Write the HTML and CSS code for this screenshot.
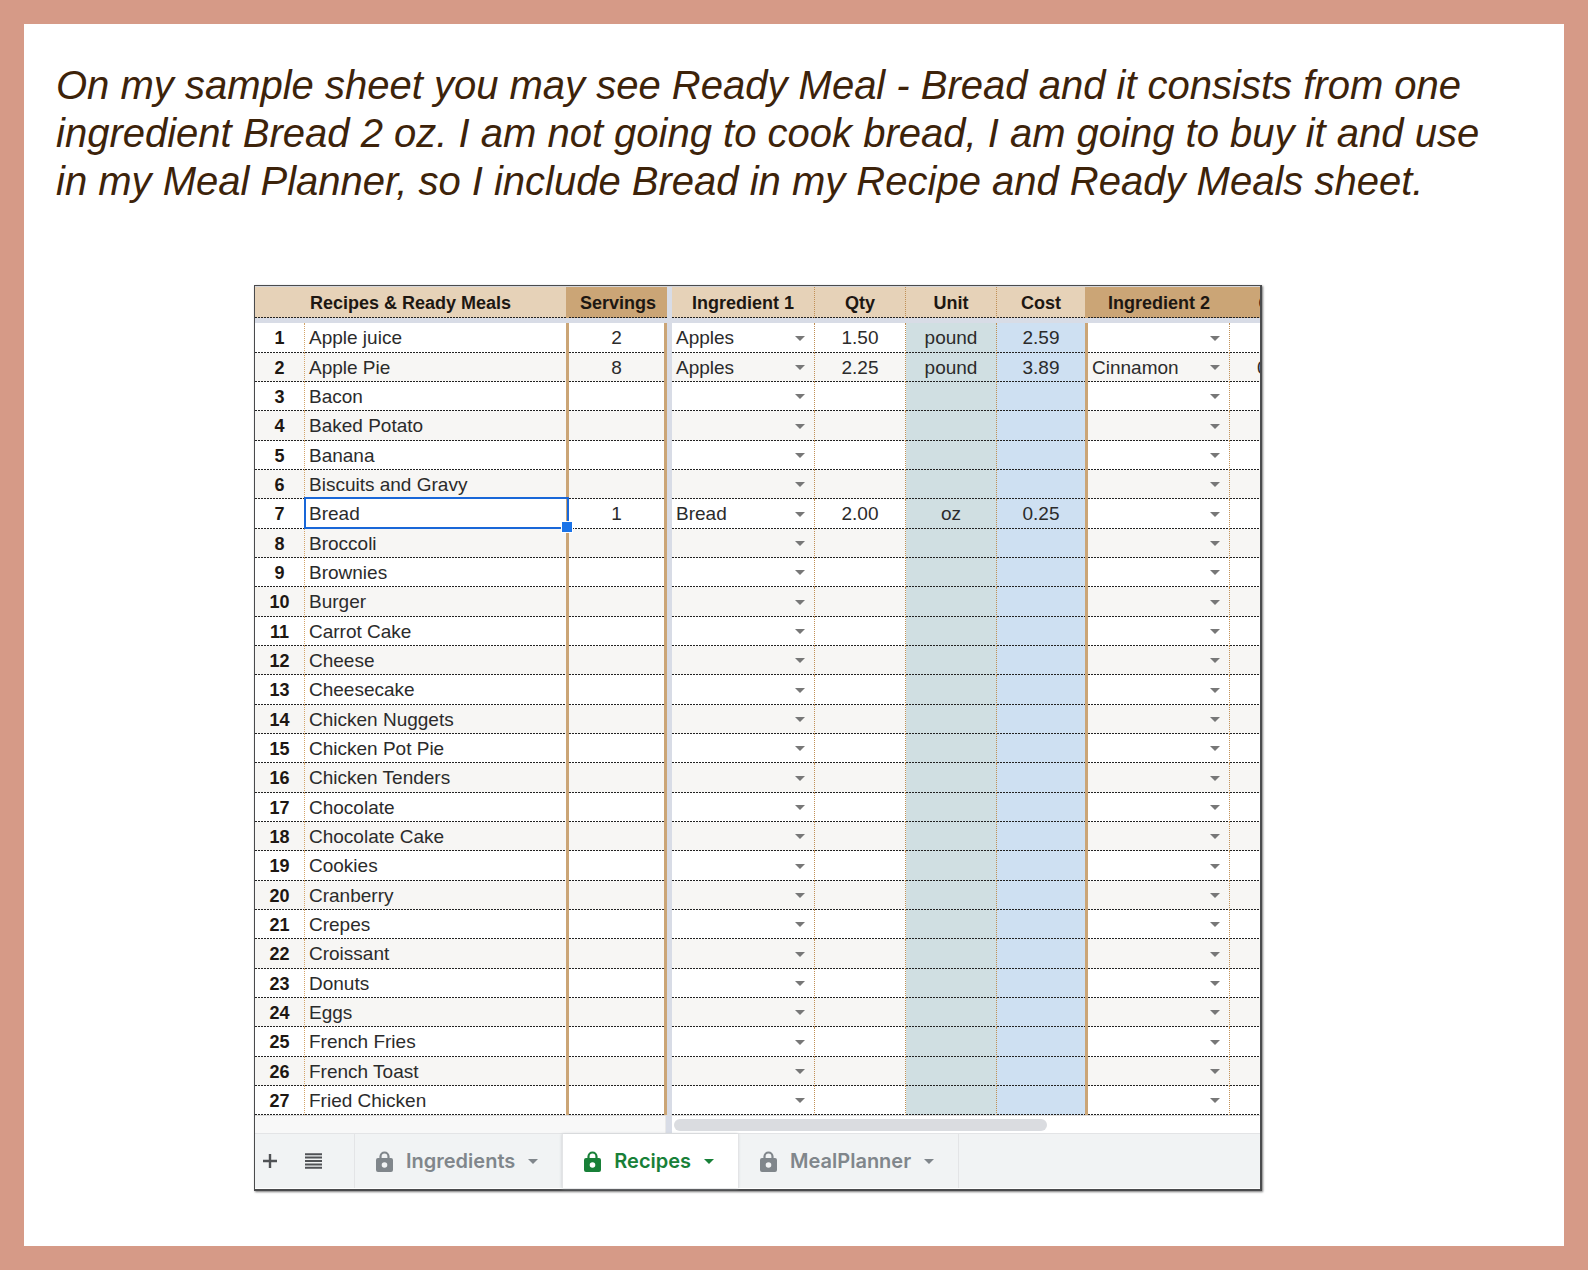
FILE: index.html
```
<!DOCTYPE html>
<html lang="en">
<head>
<meta charset="utf-8">
<title>Recipes and Ready Meals</title>
<link rel="stylesheet" href="styles.css">
</head>
<body>
<main class="page">
  <p class="intro">On my sample sheet you may see Ready Meal - Bread and it consists from one ingredient Bread 2 oz. I am not going to cook bread, I am going to buy it and use in my Meal Planner, so I include Bread in my Recipe and Ready Meals sheet.</p>
  <section class="sheet">
    <div class="grid">
      <table class="recipes">
        <colgroup><col class="c-num"><col class="c-name"><col class="c-servings"><col class="c-ingredient"><col class="c-qty"><col class="c-unit"><col class="c-cost"><col class="c-second"><col class="c-qty"></colgroup>
        <thead>
          <tr><th class="title" colspan="2">Recipes &amp; Ready Meals</th><th class="deep">Servings</th><th class="first dots">Ingredient 1</th><th class="dots">Qty</th><th class="dots">Unit</th><th class="edge">Cost</th><th class="deep">Ingredient 2</th><th class="deep end">Qty</th></tr>
          <tr class="freeze"><td colspan="9"></td></tr>
        </thead>
        <tbody id="rows"></tbody>
      </table>
    </div>
    <div class="scroll"><div class="scroll-left"></div><div class="scroll-track"><div class="thumb"></div></div></div>
    <nav class="tabs">
      <div class="tools">
        <button class="tool" aria-label="Add sheet"><svg width="14" height="14" viewBox="0 0 14 14"><path d="M7 0v14M0 7h14" stroke="#505255" stroke-width="2.4"/></svg></button>
        <button class="tool" aria-label="All sheets"><svg width="17" height="16" viewBox="0 0 17 16"><path d="M0 1.2h17M0 4.6h17M0 8h17M0 11.4h17M0 14.8h17" stroke="#505255" stroke-width="2"/></svg></button>
      </div>
      <button class="tab"><svg class="lock" viewBox="0 0 17 21"><path d="M4.500 8V5.500a4 4 0 0 1 8 0V8" fill="none" stroke="currentColor" stroke-width="2.2"/><path fill="currentColor" fill-rule="evenodd" d="M2 7h13q2 0 2 2v10q0 2-2 2H2q-2 0-2-2V9q0-2 2-2zm6.500 4.200a2.800 2.800 0 1 0 0 5.600a2.800 2.800 0 1 0 0-5.600z"/></svg><span>Ingredients</span><i class="arrow"></i></button>
      <button class="tab active"><svg class="lock" viewBox="0 0 17 21"><path d="M4.500 8V5.500a4 4 0 0 1 8 0V8" fill="none" stroke="currentColor" stroke-width="2.2"/><path fill="currentColor" fill-rule="evenodd" d="M2 7h13q2 0 2 2v10q0 2-2 2H2q-2 0-2-2V9q0-2 2-2zm6.500 4.200a2.800 2.800 0 1 0 0 5.600a2.800 2.800 0 1 0 0-5.600z"/></svg><span>Recipes</span><i class="arrow"></i></button>
      <button class="tab last"><svg class="lock" viewBox="0 0 17 21"><path d="M4.500 8V5.500a4 4 0 0 1 8 0V8" fill="none" stroke="currentColor" stroke-width="2.2"/><path fill="currentColor" fill-rule="evenodd" d="M2 7h13q2 0 2 2v10q0 2-2 2H2q-2 0-2-2V9q0-2 2-2zm6.500 4.200a2.800 2.800 0 1 0 0 5.600a2.800 2.800 0 1 0 0-5.600z"/></svg><span>MealPlanner</span><i class="arrow"></i></button>
    </nav>
  </section>
</main>
<script src="rows.js"></script>
</body>
</html>
```
FILE: rows.js
```
const names = ["Apple juice", "Apple Pie", "Bacon", "Baked Potato", "Banana", "Biscuits and Gravy", "Bread", "Broccoli", "Brownies", "Burger", "Carrot Cake", "Cheese", "Cheesecake", "Chicken Nuggets", "Chicken Pot Pie", "Chicken Tenders", "Chocolate", "Chocolate Cake", "Cookies", "Cranberry", "Crepes", "Croissant", "Donuts", "Eggs", "French Fries", "French Toast", "Fried Chicken"];
// servings, ingredient, quantity, unit, cost, second ingredient, second quantity
const details = {
  1: ["2", "Apples", "1.50", "pound", "2.59", "", ""],
  2: ["8", "Apples", "2.25", "pound", "3.89", "Cinnamon", "0.50"],
  7: ["1", "Bread", "2.00", "oz", "0.25", "", ""]
};
const empty = ["", "", "", "", "", "", ""];
const pick = text => `<div class="pick"><span>${text}</span><i class="arrow"></i></div>`;
document.getElementById("rows").innerHTML = names.map((name, i) => {
  const d = details[i + 1] || empty;
  const selected = name === "Bread" ? " selected" : "";
  return `<tr><th class="num" scope="row">${i + 1}</th><td class="name${selected}">${name}</td><td class="servings">${d[0]}</td><td class="first dots">${pick(d[1])}</td><td class="dots">${d[2]}</td><td class="unit dots">${d[3]}</td><td class="cost">${d[4]}</td><td class="dots">${pick(d[5])}</td><td>${d[6]}</td></tr>`;
}).join("");
```
FILE: styles.css
```
* { box-sizing: border-box; }
body { margin: 0; font-family: "Liberation Sans", Arial, sans-serif; }
.page {
  min-height: 100vh;
  border: 24px solid #d69a87;
  padding: 37px 64px 32px 32px;
  background: #fff;
}
.intro {
  margin: 0;
  color: #3d230a;
  font-size: 40px;
  font-style: italic;
  line-height: 48px;
}
.sheet {
  max-width: 1008px;
  margin: 80px 0 0 198px;
  border: 1px solid #4a4b4d;
  border-width: 1px 2px 2px 1px;
  box-shadow: 1px 1px 2px #777;
}
.grid { overflow: hidden; padding-top: 1px; background: #d5d5d8; }
.recipes {
  width: 1066px;
  table-layout: fixed;
  border-collapse: separate;
  border-spacing: 0;
  background: #fff;
  color: #2b2b2b;
  font-size: 19px;
  line-height: 24px;
}
.c-num { width: 50px; }
.c-name { width: 264px; }
.c-servings { width: 98px; }
.c-ingredient { width: 148px; }
.c-qty { width: 91px; }
.c-unit { width: 91px; }
.c-cost { width: 91px; }
.c-second { width: 142px; }
.recipes th, .recipes td { padding: 0; text-align: center; }
.recipes thead th {
  height: 31px;
  background-color: #e6d2b8;
  color: #1d1712;
  font-size: 18px;
}
.recipes thead th.title, .recipes thead th.edge { border-right: 3px solid #cba576; }
.recipes thead th.deep { background-color: #cba576; }
.recipes thead th.end { padding-right: 4px; }
.recipes .freeze td { height: 5px; background: #d8dce6; }
.recipes tbody tr { height: 29px; }
.recipes tbody tr:nth-child(3n+1) { height: 30px; }
.recipes tbody tr:nth-child(even) { background: #f7f6f4; }
.recipes thead th, .recipes tbody th, .recipes tbody td {
  background-image: repeating-linear-gradient(90deg, #222 0 2px, transparent 2px 3px);
  background-position: 0 100%;
  background-repeat: no-repeat;
  background-size: 100% 1px;
}
.recipes .num { border-right: 1px dotted #d3a469; color: #1d1712; font-size: 18px; }
.recipes .dots { border-right: 1px dotted #c08f55; }
.recipes td.name { padding-left: 4px; border-right: 3px solid #cba576; text-align: left; }
.recipes td.servings { border-right: 3px solid #cba576; }
.recipes .first { border-left: 5px solid #d8dce6; }
.recipes .unit { background-color: #d0dfe2; }
.recipes .cost { border-right: 3px solid #cba576; background-color: #cee0f2; }
.recipes .selected { position: relative; }
.selected::before {
  content: "";
  position: absolute;
  inset: -2px -3px 0 -1px;
  border: 2px solid #1967d8;
}
.selected::after {
  content: "";
  position: absolute;
  right: -7px;
  bottom: -4px;
  width: 10px;
  height: 10px;
  border: 1px solid #fff;
  background: #1a73e8;
}
.pick { display: flex; align-items: center; justify-content: space-between; padding: 0 9px 0 4px; }
.arrow {
  width: 0;
  border: 5px solid transparent;
  border-top: 5px solid #777;
  border-bottom: 0;
}
.scroll { display: flex; height: 19px; border-top: 1px solid #ddd; border-bottom: 1px solid #e3e4e6; }
.scroll-left { width: 411px; border-right: 1px solid #e9e9e9; background: #f8f8f8; }
.scroll-track { flex: 1; border-left: 6px solid #d8dce6; padding: 3px 2px; }
.thumb { width: 373px; height: 12px; border-radius: 6px; background: #dadce0; }
.tabs { display: flex; height: 55px; border-bottom: 1px solid #fff; background: #f1f3f4; }
.tools { display: flex; align-items: center; gap: 28px; width: 99px; padding-left: 8px; }
.tool { display: flex; padding: 0; border: 0; background: none; }
.tab {
  display: flex;
  align-items: center;
  gap: 13px;
  padding: 0 24px 0 21px;
  border: 0;
  border-left: 1px solid #e3e4e6;
  background: none;
  color: #80868b;
  font: 600 20px/24px Inter, "Open Sans", sans-serif;
}
.tab.active { background: #fff; color: #188038; box-shadow: 0 0 3px #c8cacc; }
.tab.last { border-right: 1px solid #e3e4e6; }
.tab .arrow { border-width: 5px 5px 0; border-top-color: currentColor; }
.lock { width: 17px; height: 21px; }
```
